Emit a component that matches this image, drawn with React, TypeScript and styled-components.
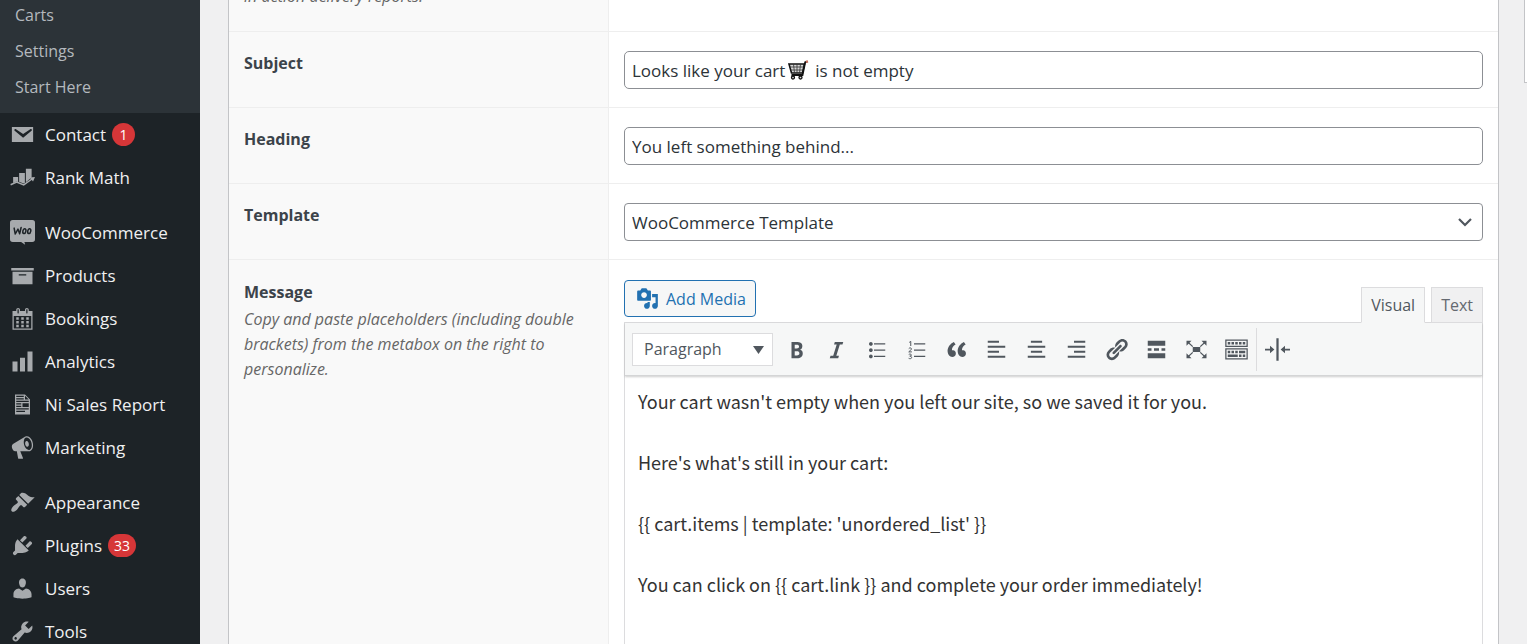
import React from 'react';
import styled, { createGlobalStyle } from 'styled-components';

const UI_FONT = '"Open Sans", "Noto Sans", sans-serif';
const EDITOR_FONT = '"Noto Sans CJK SC", "Noto Sans", sans-serif';

const GlobalStyle = createGlobalStyle`
  *, *::before, *::after { box-sizing: border-box; }
  body { margin: 0; background: #f0f0f1; font-family: ${UI_FONT}; font-size: 16px; color: #3c434a; }
  button, input, select { font: inherit; color: inherit; margin: 0; }
  a { text-decoration: none; color: inherit; }
`;

const Shell = styled.div`
  display: flex;
  height: 100vh;
  overflow: hidden;
`;

/* ---------- Admin menu ---------- */

const Sidebar = styled.nav`
  flex: 0 0 200px;
  background: #1d2327;
  overflow: hidden;
`;

const SubMenu = styled.div`
  margin-top: -3px;
  padding-bottom: 8px;
  background: #2c3338;
`;

const SubLink = styled.a`
  display: flex;
  align-items: center;
  height: 36px;
  padding-left: 15px;
  font-size: 16px;
  color: #b4b9be;
`;

const MenuGroup = styled.div`
  margin-bottom: 12px;
`;

const MenuLink = styled.a`
  display: flex;
  align-items: center;
  height: 43px;
  padding-left: 10px;
  font-size: 17px;
  color: #f0f0f1;
`;

const MenuIcon = styled.svg`
  flex: none;
  width: 25px;
  height: 25px;
  margin-right: 10px;
  fill: #a7aaad;
`;

const Badge = styled.span`
  display: inline-flex;
  align-items: center;
  justify-content: center;
  min-width: 23px;
  height: 23px;
  margin-left: 6px;
  padding: 0 6px;
  border-radius: 12px;
  background: #d63638;
  color: #fff;
  font-size: 14px;
`;

/* ---------- Settings panel ---------- */

const Main = styled.main`
  flex: 1;
  min-width: 0;
  display: flex;
  gap: 25px;
  padding-left: 28px;
`;

const Panel = styled.section`
  flex: 1;
  min-width: 0;
  margin-top: -38px;
  background: #fff;
  border: solid #c3c4c7;
  border-width: 0 1px;
`;

const SideBox = styled.aside`
  flex: 0 0 3px;
  height: 83px;
  background: #fff;
  border: solid #c3c4c7;
  border-width: 0 0 1px 1px;
`;

const Row = styled.div<{ $last?: boolean }>`
  display: grid;
  grid-template-columns: 380px minmax(0, 1fr);
  border-bottom: ${(p) => (p.$last ? '0' : '1px solid #eee')};
  min-height: ${(p) => (p.$last ? '400px' : '0')};
`;

const LabelCell = styled.div<{ $tall?: boolean }>`
  padding: ${(p) => (p.$tall ? '20px' : '19px')} 15px 18px;
  background: #f9f9f9;
  border-right: 1px solid #eee;
`;

const FieldCell = styled.div<{ $tall?: boolean }>`
  padding: ${(p) => (p.$tall ? '20px' : '19px')} 15px 18px;
`;

const Label = styled.label`
  display: block;
  font-size: 16px;
  line-height: 24px;
  font-weight: 700;
`;

const Hint = styled.p`
  margin: 3px 0 4px;
  font-size: 16px;
  line-height: 25px;
  font-style: italic;
  color: #666;
`;

const FieldWrap = styled.div`
  position: relative;
`;

const TextInput = styled.input`
  display: block;
  width: 100%;
  height: 38px;
  padding: 0 7px;
  border: 1px solid #8c8f94;
  border-radius: 5px;
  background: #fff;
  color: #2c3338;
  font-size: 17px;
`;

const Select = styled.select`
  display: block;
  width: 100%;
  height: 38px;
  padding: 0 30px 0 7px;
  border: 1px solid #8c8f94;
  border-radius: 4px;
  background: #fff;
  color: #2c3338;
  font-size: 17px;
  appearance: none;
`;

const SelectArrow = styled.svg`
  position: absolute;
  top: 9px;
  right: 8px;
  width: 20px;
  height: 20px;
  pointer-events: none;
`;

const CartPicture = styled.svg`
  position: absolute;
  top: 8px;
  left: 162px;
  width: 24px;
  height: 22px;
  background: #fff;
  pointer-events: none;
`;

/* ---------- Editor ---------- */

const EditorTop = styled.div`
  display: flex;
  justify-content: space-between;
  align-items: flex-start;
`;

const MediaButton = styled.button`
  display: flex;
  align-items: center;
  gap: 7px;
  height: 37px;
  margin-bottom: 5px;
  padding: 0 9px 0 11px;
  border: 1px solid #2271b1;
  border-radius: 4px;
  background: #f6f7f7;
  color: #2271b1;
  font-size: 16px;
`;

const MediaIcon = styled.svg`
  width: 23px;
  height: 23px;
  fill: currentColor;
`;

const Tabs = styled.div`
  display: flex;
  gap: 6px;
  align-self: flex-end;
`;

const Tab = styled.button<{ $active?: boolean }>`
  position: relative;
  z-index: 1;
  height: 36px;
  margin-bottom: -1px;
  padding: 0 9px;
  border: 1px solid #dcdcde;
  border-bottom-color: ${(p) => (p.$active ? '#f6f7f7' : '#dcdcde')};
  background: ${(p) => (p.$active ? '#f6f7f7' : '#f0f0f1')};
  color: ${(p) => (p.$active ? '#50575e' : '#646970')};
  font-size: 16px;
`;

const Editor = styled.div`
  min-height: 340px;
  border: 1px solid #dcdcde;
`;

const Toolbar = styled.div`
  display: flex;
  align-items: center;
  height: 53px;
  padding-left: 7px;
  background: #f6f7f7;
  border-bottom: 1px solid #d4d5d6;
  box-shadow: 0 1px 2px rgba(0, 0, 0, 0.2);
`;

const FormatWrap = styled.div`
  position: relative;
  width: 141px;
  margin-right: 3px;
`;

const FormatSelect = styled.select`
  display: block;
  width: 100%;
  height: 33px;
  padding: 0 11px;
  border: 1px solid #dcdcde;
  border-radius: 0;
  background: #fff;
  color: #50575e;
  font-size: 16px;
  appearance: none;
`;

const FormatArrow = styled.svg`
  position: absolute;
  top: 13px;
  right: 9px;
  width: 11px;
  height: 8px;
  fill: #50575e;
  pointer-events: none;
`;

const ToolButton = styled.button`
  display: flex;
  align-items: center;
  justify-content: center;
  width: 40px;
  height: 40px;
  padding: 0;
  border: 0;
  background: none;
`;

const ToolIcon = styled.svg`
  width: 25px;
  height: 25px;
  fill: #50575e;
`;

const ToolGroup = styled.div`
  display: flex;
  align-items: center;
  height: 43px;
  & + & { border-left: 1px solid #dcdcde; }
`;

const Content = styled.div`
  padding: 10px 13px;
  outline: none;
  font-family: ${EDITOR_FONT};
  font-size: 18px;
  line-height: 31px;
  color: #333;
`;

const Paragraph = styled.p`
  margin: 0 0 30px;
`;

/* ---------- Icons ---------- */

const icons: Record<string, React.ReactNode> = {
  email: <path d="M1.5 4h17v12h-17V4zm8.99 8.6l6.74-5.53c.24-.2.43-.66.13-1.07-.29-.41-.82-.42-1.17-.17l-5.7 3.86L4.8 5.83c-.35-.25-.88-.24-1.17.17-.3.41-.11.87.13 1.07z" />,
  rank: (
    <>
      <path d="M2.500 9.500h4v4.300l-1.200-.7-2.800 1.200zM7.300 6.300h4.600v8l-1 .4-3.600-1.400zM12.700 3h4.600v7l-4.600 3.700z" />
      <path d="M.5 15.800l4.800-2.200 5.700 2.300 6.600-4.700" fill="none" stroke="#a7aaad" strokeWidth="1.200" />
      <path d="M15.800 9.900l4.200-.3-1.600 3.500z" />
    </>
  ),
  woo: (
    <>
      <path d="M2.200 0h15.600A2.200 2.200 0 0 1 20 2.200v13.100a2.200 2.200 0 0 1-2.200 2.200h-6.300l.6 2.300-3.200-2.300H2.200A2.200 2.200 0 0 1 0 15.300V2.200A2.200 2.200 0 0 1 2.200 0z" />
      <g fill="none" stroke="#1d2327" strokeWidth="1.200" strokeLinecap="round" strokeLinejoin="round">
        <path d="M3.300 6.500l.9 4.700 2.200-3.900 1.300 3.700L8.900 6" />
        <ellipse cx="11.500" cy="8.900" rx="1.200" ry="2" transform="rotate(12 11.500 8.900)" />
        <ellipse cx="15.400" cy="8.900" rx="1.200" ry="2" transform="rotate(12 15.400 8.900)" />
      </g>
    </>
  ),
  archive: <path d="M19 4v2H1V4h18zM2 7h16v10H2V7zm11 3V9H7v1h6z" />,
  calendar: <path d="M15 4h3v15H2V4h3V3c0-.41.15-.76.44-1.06.29-.29.65-.44 1.06-.44s.77.15 1.06.44c.29.3.44.65.44 1.06v1h4V3c0-.41.15-.76.44-1.06.29-.29.65-.44 1.06-.44s.77.15 1.06.44c.29.3.44.65.44 1.06v1zM6 3v2.500c0 .14.05.26.15.36.09.09.21.14.35.14s.26-.05.35-.14c.1-.1.15-.22.15-.36V3c0-.14-.05-.26-.15-.35-.09-.1-.21-.15-.35-.15s-.26.05-.35.15c-.1.09-.15.21-.15.35zm7 0v2.500c0 .14.05.26.14.36.1.09.22.14.36.14s.26-.05.36-.14c.09-.1.14-.22.14-.36V3c0-.14-.05-.26-.14-.35-.1-.1-.22-.15-.36-.15s-.26.05-.36.15c-.09.09-.14.21-.14.35zm4 15V8H3v10h14zM7 9v2H5V9h2zm2 0h2v2H9V9zm4 2V9h2v2h-2zm-6 1v2H5v-2h2zm2 0h2v2H9v-2zm4 2v-2h2v2h-2zm-6 1v2H5v-2h2zm4 2H9v-2h2v2zm4 0h-2v-2h2v2z" />,
  chart: <path d="M18 18V2h-4v16h4zm-6 0V7H8v11h4zm-6 0v-8H2v8h4z" />,
  document: <path d="M12 2l4 4v12H4V2h8zM5 3v1h6V3H5zm7 3h3l-3-3v3zM5 5v1h6V5H5zm10 3V7H5v1h10zM5 9v1h4V9H5zm10 3V9h-5v3h5zM5 11v1h4v-1H5zm10 3v-1H5v1h10zm-3 2v-1H5v1h7z" />,
  megaphone: <path d="M18.150 5.940c.46 1.620.38 3.220-.02 4.480-.42 1.280-1.260 2.180-2.300 2.480-.16.06-.26.06-.4.06-.06.02-.12.02-.18.02-.06.02-.14.02-.22.02h-6.800l2.220 5.500c.02.14-.06.26-.14.34-.08.1-.24.16-.34.16H6.950c-.1 0-.26-.06-.34-.16-.08-.08-.16-.2-.14-.34l-1-5.500H4.250l-.02-.02c-.5.06-1.080-.18-1.540-.62s-.88-1.080-1.060-1.880c-.24-.8-.2-1.560-.02-2.200.18-.62.58-1.080 1.060-1.300l.02-.02 9-5.400c.1-.06.18-.1.24-.16.06-.04.14-.08.24-.12.16-.08.28-.12.5-.18 1.040-.3 2.240.1 3.220.98s1.840 2.240 2.260 3.860zm-2.580 5.980h-.02c.4-.1.74-.34 1.040-.7.58-.7.86-1.760.86-3.040 0-.64-.1-1.300-.28-1.980-.34-1.360-1.020-2.500-1.780-3.240s-1.680-1.100-2.460-.88c-.82.22-1.400.96-1.700 2-.32 1.040-.28 2.360.06 3.720.38 1.360 1 2.500 1.800 3.240.78.74 1.620 1.100 2.480.88zm-2.540-7.080c.22-.04.42-.02.62.04.38.16.76.48 1.020 1s.42 1.200.42 1.780c0 .3-.04.56-.12.8-.18.48-.44.84-.86.94-.34.1-.8-.06-1.140-.4s-.64-.86-.78-1.500c-.18-.62-.12-1.240.02-1.720s.48-.84.82-.94z" />,
  brush: <path d="M14.480 11.060L7.410 3.990l1.500-1.500c.5-.56 2.300-.47 3.510.32 1.210.8 1.430 1.280 2.910 2.100 1.180.64 2.450 1.260 4.450.85zm-.71.71L6.700 4.700 4.930 6.470c-.39.39-.39 1.020 0 1.410l1.060 1.060c.39.39.39 1.030 0 1.420-.6.6-1.430 1.110-2.210 1.690-.35.26-.7.53-1.010.84C1.430 14.230.4 16.080 1.400 17.070c.99 1 2.840-.03 4.180-1.360.31-.31.58-.66.85-1.020.57-.78 1.080-1.610 1.690-2.210.39-.39 1.020-.39 1.410 0l1.060 1.060c.39.39 1.020.39 1.410 0z" />,
  plug: <path d="M13.110 4.360L9.870 7.600 8 5.730l3.240-3.240c.35-.34 1.050-.2 1.560.32.52.51.66 1.210.31 1.550zm-8 1.770l.91-1.120 9.010 9.010-1.190.84c-.71.71-2.630 1.160-3.820 1.160H6.140L4.900 17.260c-.59.59-1.540.59-2.120 0-.59-.58-.59-1.530 0-2.120l1.240-1.240v-3.880c0-1.130.4-3.190 1.090-3.890zm7.260 3.970l3.240-3.240c.34-.35 1.040-.21 1.550.31.52.51.66 1.210.31 1.550l-3.240 3.250z" />,
  user: <path d="M10 9.250c-2.270 0-2.730-3.440-2.730-3.440C7 4.020 7.820 2 9.970 2c2.160 0 2.980 2.020 2.710 3.810 0 0-.41 3.440-2.680 3.440zm0 2.570L12.720 10c2.390 0 4.520 2.330 4.520 4.530v2.490s-3.650 1.130-7.240 1.130c-3.650 0-7.240-1.130-7.240-1.130v-2.490c0-2.250 1.940-4.480 4.470-4.480z" />,
  wrench: <path d="M16.680 9.770c-1.340 1.340-3.300 1.670-4.950.99l-5.410 6.520c-.99.99-2.590.99-3.580 0s-.99-2.590 0-3.570l6.520-5.420c-.68-1.650-.35-3.610.99-4.950 1.280-1.280 3.120-1.620 4.720-1.060l-2.890 2.890 2.820 2.820 2.860-2.870c.53 1.580.18 3.390-1.080 4.650zM3.810 16.210c.4.39 1.040.39 1.430 0 .4-.4.4-1.040 0-1.430-.39-.4-1.030-.4-1.430 0-.39.39-.39 1.030 0 1.430z" />,
  bold: <path d="M6 4v13h4.540c1.370 0 2.460-.33 3.260-1 .8-.66 1.200-1.580 1.200-2.770 0-.84-.17-1.510-.51-2.010s-.9-.85-1.670-1.030v-.09c.57-.1 1.020-.4 1.360-.9s.51-1.130.51-1.910c0-1.140-.39-1.980-1.170-2.500C12.750 4.260 11.500 4 9.780 4H6zm2.570 5.150V6.260h1.360c.73 0 1.270.11 1.610.32.34.22.51.58.51 1.070 0 .54-.16.92-.47 1.150s-.82.35-1.510.35h-1.500zm0 2.190h1.600c1.440 0 2.160.53 2.160 1.610 0 .6-.17 1.050-.51 1.340s-.86.43-1.570.43H8.570v-3.380z" />,
  italic: <path d="M14.780 6h-2.130l-2.800 9h2.120l-.62 2H4.600l.62-2h2.140l2.800-9H8.030l.62-2h6.750z" />,
  bullets: <path d="M5.500 7C4.670 7 4 6.330 4 5.500 4 4.680 4.670 4 5.500 4 6.320 4 7 4.680 7 5.500 7 6.330 6.320 7 5.500 7zM8 5h9v1H8V5zm-2.500 7c-.83 0-1.500-.67-1.500-1.500C4 9.680 4.670 9 5.500 9c.82 0 1.500.68 1.500 1.500 0 .83-.68 1.500-1.500 1.500zM8 10h9v1H8v-1zm-2.500 7c-.83 0-1.500-.67-1.500-1.500 0-.82.67-1.500 1.500-1.500.82 0 1.500.68 1.500 1.500 0 .83-.68 1.500-1.500 1.500zM8 15h9v1H8v-1z" />,
  numbers: (
    <>
      <path d="M8 5h9v1H8zM8 10h9v1H8zM8 15h9v1H8z" />
      <g fill="none" stroke="#50575e" strokeWidth=".8">
        <path d="M4.200 4.300l1.200-.8v3.700" />
        <path d="M3.800 9.300c.6-.9 2.300-.7 2.100.3-.1.800-1.300 1.500-2.100 2.300h2.500" />
        <path d="M3.800 14c.7-.6 2.100-.4 2.100.4 0 .7-.6.9-1.300.9.800 0 1.500.3 1.500 1.100 0 1-1.500 1.200-2.400.6" />
      </g>
    </>
  ),
  quote: <path d="M9.490 13.220c0-.74-.2-1.380-.61-1.900-.62-.78-1.830-.88-2.530-.72-.29-1.650 1.110-3.750 2.920-4.650L7.880 4c-2.730 1.300-5.420 4.280-4.960 8.050C3.210 14.430 4.590 16 6.540 16c.85 0 1.560-.25 2.120-.75s.83-1.180.83-2.030zm8.050 0c0-.74-.2-1.380-.61-1.900-.63-.78-1.830-.88-2.530-.72-.29-1.650 1.110-3.750 2.920-4.650L15.930 4c-2.730 1.300-5.410 4.280-4.950 8.050.29 2.380 1.660 3.950 3.610 3.950.85 0 1.560-.25 2.120-.75s.83-1.180.83-2.030z" />,
  left: <path d="M3 3h9v1.600H3zM3 7h14v1.600H3zM3 11h9v1.600H3zM3 15h14v1.600H3z" />,
  center: <path d="M5.500 3h9v1.600h-9zM3 7h14v1.600H3zM5.500 11h9v1.600h-9zM3 15h14v1.600H3z" />,
  right: <path d="M8 3h9v1.600H8zM3 7h14v1.600H3zM8 11h9v1.600H8zM3 15h14v1.600H3z" />,
  link: <path d="M17.740 2.760c1.680 1.690 1.680 4.410 0 6.100l-1.530 1.520c-1.120 1.120-2.700 1.470-4.140 1.090l2.620-2.610.76-.77.76-.76c.84-.84.84-2.200 0-3.040-.84-.85-2.200-.85-3.040 0l-.77.76-3.380 3.380c-.37-1.440-.02-3.020 1.100-4.140l1.520-1.530c1.690-1.680 4.420-1.680 6.100 0zM8.590 13.430l5.340-5.340c.42-.42.42-1.100 0-1.520-.44-.43-1.130-.39-1.530 0l-5.330 5.340c-.42.42-.42 1.100 0 1.520.44.43 1.130.39 1.520 0zm-.76 2.290l4.140-4.150c.38 1.440.03 3.020-1.090 4.140l-1.520 1.530c-1.690 1.680-4.410 1.680-6.100 0-1.680-1.680-1.680-4.420 0-6.100l1.530-1.520c1.120-1.120 2.700-1.470 4.140-1.100l-4.140 4.150c-.85.84-.85 2.200 0 3.050.84.84 2.200.84 3.040 0z" />,
  more: <path d="M17 7V3H3v4h14zM6 11V9H3v2h3zm6 0V9H8v2h4zm5 0V9h-3v2h3zm0 6v-4H3v4h14z" />,
  fullscreen: (
    <>
      <path d="M7 8h6v4H7zM2 3h4L2 7zM18 3v4l-4-4zM2 17v-4l4 4zM18 17h-4l4-4z" />
      <path d="M3 4l4 3.700M17 4l-4 3.700M3 16l4-3.700M17 16l-4-3.700" fill="none" stroke="#50575e" strokeWidth="1" />
    </>
  ),
  sink: <path d="M19 2v6H1V2h18zm-1 5V3H2v4h16zM5 4v2H3V4h2zm3 0v2H6V4h2zm3 0v2H9V4h2zm3 0v2h-2V4h2zm3 0v2h-2V4h2zm2 5v9H1V9h18zm-1 8v-7H2v7h16zM5 11v2H3v-2h2zm3 0v2H6v-2h2zm3 0v2H9v-2h2zm6 0v2h-5v-2h5zm-6 3v2H3v-2h8zm3 0v2h-2v-2h2zm3 0v2h-2v-2h2z" />,
  split: <path d="M9.100 1h1.800v18H9.100zM0 9.300h4V7l3.500 3L4 13v-2.300H0zM20 9.300h-4V7l-3.500 3 3.500 3v-2.300h4z" />,
};

interface MenuItem {
  icon: string;
  text: string;
  count?: number;
}

const menu: MenuItem[][] = [
  [
    { icon: 'email', text: 'Contact', count: 1 },
    { icon: 'rank', text: 'Rank Math' },
  ],
  [
    { icon: 'woo', text: 'WooCommerce' },
    { icon: 'archive', text: 'Products' },
    { icon: 'calendar', text: 'Bookings' },
    { icon: 'chart', text: 'Analytics' },
    { icon: 'document', text: 'Ni Sales Report' },
    { icon: 'megaphone', text: 'Marketing' },
  ],
  [
    { icon: 'brush', text: 'Appearance' },
    { icon: 'plug', text: 'Plugins', count: 33 },
    { icon: 'user', text: 'Users' },
    { icon: 'wrench', text: 'Tools' },
  ],
];

const tools: [string, string][] = [
  ['bold', 'Bold'],
  ['italic', 'Italic'],
  ['bullets', 'Bulleted list'],
  ['numbers', 'Numbered list'],
  ['quote', 'Blockquote'],
  ['left', 'Align left'],
  ['center', 'Align center'],
  ['right', 'Align right'],
  ['link', 'Insert link'],
  ['more', 'Insert Read More tag'],
  ['fullscreen', 'Fullscreen'],
  ['sink', 'Toolbar Toggle'],
];

const message = [
  "Your cart wasn't empty when you left our site, so we saved it for you.",
  "Here's what's still in your cart:",
  "{{ cart.items | template: 'unordered_list' }}",
  'You can click on {{ cart.link }} and complete your order immediately!',
];

function Tool({ icon, title }: { icon: string; title: string }) {
  return (
    <ToolButton type="button" aria-label={title}>
      <ToolIcon viewBox="0 0 20 20">{icons[icon]}</ToolIcon>
    </ToolButton>
  );
}

export default function App() {
  return (
    <>
      <GlobalStyle />
      <Shell>
        <Sidebar>
          <SubMenu>
            <SubLink href="#carts">Carts</SubLink>
            <SubLink href="#settings">Settings</SubLink>
            <SubLink href="#start">Start Here</SubLink>
          </SubMenu>
          {menu.map((group, i) => (
            <MenuGroup key={i}>
              {group.map((item) => (
                <MenuLink key={item.text} href={`#${item.icon}`}>
                  <MenuIcon viewBox="0 0 20 20">{icons[item.icon]}</MenuIcon>
                  {item.text}
                  {item.count && <Badge>{item.count}</Badge>}
                </MenuLink>
              ))}
            </MenuGroup>
          ))}
        </Sidebar>
        <Main>
          <Panel>
            <Row>
              <LabelCell>
                <Hint>in action delivery reports.</Hint>
              </LabelCell>
              <FieldCell />
            </Row>
            <Row>
              <LabelCell>
                <Label htmlFor="subject">Subject</Label>
              </LabelCell>
              <FieldCell>
                <FieldWrap>
                  <TextInput id="subject" defaultValue="Looks like your cart 🛒 is not empty" />
                  <CartPicture viewBox="0 0 24 22">
                    <path d="M3 5h15.500l-2 9H5.500z" fill="#d8d8d8" stroke="#111" strokeWidth="1.600" />
                    <path d="M7.500 5l1 9M11 5v9M14.500 5l-1 9M4 8h13.500M4.800 11h12" fill="none" stroke="#333" strokeWidth=".8" />
                    <path d="M21.500 2.500l-2.300.8L16.500 16H5.500" fill="none" stroke="#111" strokeWidth="1.800" />
                    <path d="M20 2.900l2-.6" stroke="#c9705c" strokeWidth="2.400" />
                    <circle cx="7" cy="18.500" r="1.500" fill="#ddd" stroke="#111" strokeWidth="1.300" />
                    <circle cx="14.500" cy="18.500" r="1.500" fill="#ddd" stroke="#111" strokeWidth="1.300" />
                  </CartPicture>
                </FieldWrap>
              </FieldCell>
            </Row>
            <Row>
              <LabelCell>
                <Label htmlFor="heading">Heading</Label>
              </LabelCell>
              <FieldCell>
                <TextInput id="heading" defaultValue="You left something behind..." />
              </FieldCell>
            </Row>
            <Row>
              <LabelCell>
                <Label htmlFor="template">Template</Label>
              </LabelCell>
              <FieldCell>
                <FieldWrap>
                  <Select id="template">
                    <option>WooCommerce Template</option>
                  </Select>
                  <SelectArrow viewBox="0 0 20 20">
                    <path d="M4 7l6 6 6-6" fill="none" stroke="#50575e" strokeWidth="2.200" />
                  </SelectArrow>
                </FieldWrap>
              </FieldCell>
            </Row>
            <Row $last>
              <LabelCell $tall>
                <Label as="div" id="message-label">Message</Label>
                <Hint>
                  Copy and paste placeholders (including double brackets) from the metabox on the right to personalize.
                </Hint>
              </LabelCell>
              <FieldCell $tall>
                <EditorTop>
                  <MediaButton type="button">
                    <MediaIcon viewBox="0 0 20 20">
                      <path d="M13 11V4c0-.55-.45-1-1-1h-1.670L9 1H5L3.670 3H2c-.55 0-1 .45-1 1v7c0 .55.45 1 1 1h10c.55 0 1-.45 1-1zM7 4.500c1.380 0 2.500 1.120 2.500 2.500S8.380 9.500 7 9.500 4.500 8.380 4.500 7 5.620 4.500 7 4.500zM14 6h5v10.500c0 1.380-1.120 2.500-2.500 2.500S14 17.880 14 16.500s1.120-2.500 2.500-2.500c.17 0 .34.02.5.05V9h-3V6zm-4 8.050V13h2v3.500c0 1.380-1.120 2.500-2.500 2.500S7 17.880 7 16.500 8.120 14 9.500 14c.17 0 .34.02.5.05z" />
                    </MediaIcon>
                    Add Media
                  </MediaButton>
                  <Tabs>
                    <Tab type="button" $active>Visual</Tab>
                    <Tab type="button">Text</Tab>
                  </Tabs>
                </EditorTop>
                <Editor>
                  <Toolbar>
                    <FormatWrap>
                      <FormatSelect aria-label="Block format">
                        <option>Paragraph</option>
                      </FormatSelect>
                      <FormatArrow viewBox="0 0 11 8">
                        <path d="M0 0h11L5.500 8z" />
                      </FormatArrow>
                    </FormatWrap>
                    <ToolGroup>
                      {tools.map(([icon, title]) => (
                        <Tool key={icon} icon={icon} title={title} />
                      ))}
                    </ToolGroup>
                    <ToolGroup>
                      <Tool icon="split" title="Collapse" />
                    </ToolGroup>
                  </Toolbar>
                  <Content
                    role="textbox"
                    aria-multiline="true"
                    aria-labelledby="message-label"
                    contentEditable
                    suppressContentEditableWarning
                  >
                    {message.map((line) => (
                      <Paragraph key={line}>{line}</Paragraph>
                    ))}
                  </Content>
                </Editor>
              </FieldCell>
            </Row>
          </Panel>
          <SideBox />
        </Main>
      </Shell>
    </>
  );
}
